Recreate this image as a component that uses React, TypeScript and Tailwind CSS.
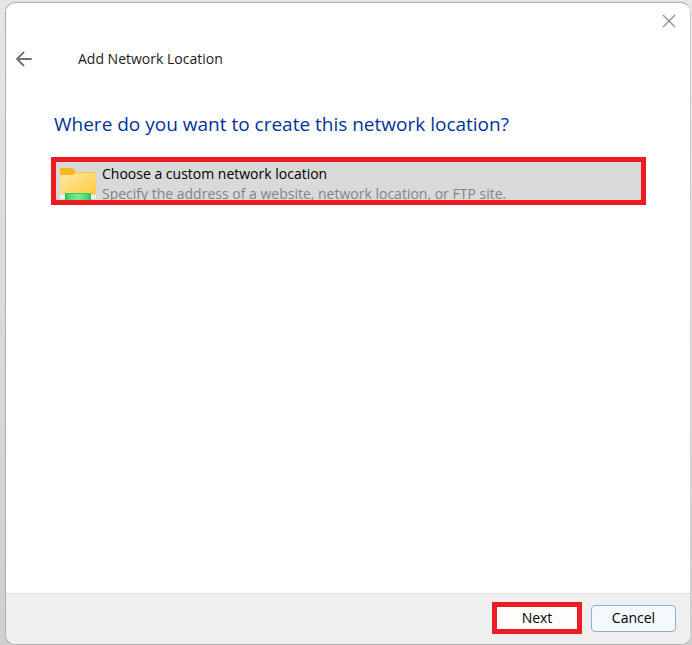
import React from "react";

function FolderIcon() {
  return (
    <svg width="36" height="34" viewBox="0 0 36 34" aria-hidden="true" className="shrink-0">
      <defs>
        <linearGradient id="folder" x1="0" y1="0" x2="1" y2="1">
          <stop offset="0" stopColor="#ffe9a6" />
          <stop offset="1" stopColor="#ffc937" />
        </linearGradient>
        <linearGradient id="cable" x1="0" y1="0" x2="1" y2="0">
          <stop offset="0" stopColor="#2fbf57" />
          <stop offset="0.2" stopColor="#52dd74" />
          <stop offset="0.5" stopColor="#74f08e" />
          <stop offset="0.8" stopColor="#52dd74" />
          <stop offset="1" stopColor="#2fbf57" />
        </linearGradient>
        <linearGradient id="clamp" x1="0" y1="0" x2="0" y2="1">
          <stop offset="0" stopColor="#d8d8d2" />
          <stop offset="0.4" stopColor="#ffffff" />
          <stop offset="1" stopColor="#a9adb0" />
        </linearGradient>
      </defs>
      <path d="M0 1.500Q0 0 1.500 0H11Q12.500 0 13.500 1L16 4H35Q36 4 36 5V12H0Z" fill="#fbb81c" />
      <path d="M0 8Q0 7 2 7H11Q13 7 14 6L15 5Q15.500 4.500 17 4.500H35Q36 4.500 36 5.500V30H0Z" fill="url(#folder)" />
      <rect x="0" y="26" width="36" height="8" rx="1" fill="url(#clamp)" />
      <rect x="5" y="25" width="26" height="9" fill="url(#cable)" />
      <path d="M5 25.500H31" stroke="#3ccb62" />
    </svg>
  );
}

export default function App() {
  return (
    <div className="flex h-screen flex-col bg-linear-to-b from-[#e6e6e6] to-[#cfcfcf] pt-[2px] pr-px pl-[5px] font-['Open_Sans','Noto_Sans',sans-serif] text-sm text-[#1a1a1a]">
      <main className="flex flex-1 flex-col overflow-hidden rounded-[10px] border border-[#adadad] border-r-[#d0d0d0] bg-white">
        <div className="flex h-9 items-center justify-end pr-[14px]">
          <button type="button" aria-label="Close">
            <svg width="14" height="14" viewBox="0 0 14 14" fill="none" stroke="#8c8c8c" strokeWidth="1.200">
              <path d="M1 1L13 13M13 1L1 13" />
            </svg>
          </button>
        </div>
        <header className="flex h-10 items-center gap-[46px] pl-[10px]">
          <button type="button" aria-label="Back">
            <svg width="16" height="16" viewBox="0 0 16 16" fill="none" stroke="#737373" strokeWidth="1.800" strokeLinecap="round" strokeLinejoin="round">
              <path d="M15 8H1M7.500 1.500L1 8L7.500 14.500" />
            </svg>
          </button>
          <span className="leading-5">Add Network Location</span>
        </header>
        <section className="flex-1 pt-[31px] pr-11 pl-[45px]">
          <h1 className="pl-[3px] text-[19px] leading-7 text-[#003399]">
            Where do you want to create this network location?
          </h1>
          <button
            type="button"
            className="mt-[19px] flex h-12 w-full gap-[6px] overflow-hidden border-5 border-[#ed1c24] bg-[#d9d9d9] pl-1 text-left"
          >
            <span className="shrink-0 pt-[6px]">
              <FolderIcon />
            </span>
            <span className="pt-[2px] leading-5 whitespace-nowrap">
              <span className="block text-black">Choose a custom network location</span>
              <span className="block text-[#838383]">
                Specify the address of a website, network location, or FTP site.
              </span>
            </span>
          </button>
        </section>
        <footer className="flex h-[51px] items-center justify-end gap-[9px] border-t border-[#dfdfdf] bg-[#efefef] pr-[14px] pb-[2px]">
          <button type="button" className="h-8 w-[90px] border-5 border-[#ed1c24] bg-[#fdfdfd] leading-5 text-black">
            Next
          </button>
          <button type="button" className="h-[27px] w-[85px] rounded-[4px] border border-[#8fb0cb] bg-[#f5f9fd] leading-5 text-black">
            Cancel
          </button>
        </footer>
      </main>
    </div>
  );
}
